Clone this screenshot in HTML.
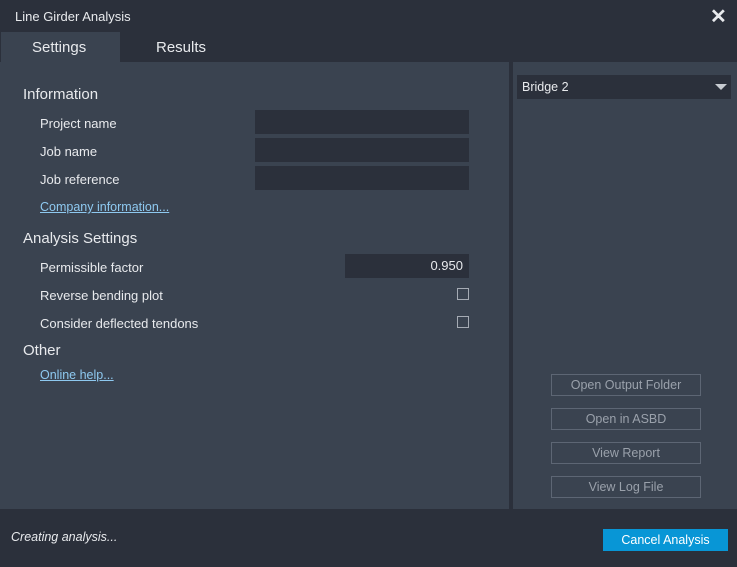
<!DOCTYPE html><html><head><style>
*{box-sizing:border-box}
body{margin:0;width:737px;height:567px;background:#2b303b;font-family:"Liberation Sans",sans-serif;color:#e8eaed;position:relative;overflow:hidden}
.a{position:absolute}
.p{background:#3a4350}
.t{font-size:13px}
.in{background:#2b303b}
.lk{color:#8ec9f0;text-decoration:underline;font-size:12.5px}
.cb{width:12px;height:12px;border:1px solid #a5abb4}
.b{border:1px solid #5d6674;color:#9aa1ab;font-size:12.5px;text-align:center;line-height:20px;width:150px;height:22px;left:551px}
</style></head><body>
<div class="a" style="left:15px;top:9px;font-size:13px">Line Girder Analysis</div>
<div class="a" style="left:710px;top:4px;font-size:20px;font-weight:bold">✕</div>
<div class="a p" style="left:1px;top:32px;width:119px;height:30px"></div>
<div class="a" style="left:32px;top:39px;font-size:15px">Settings</div>
<div class="a" style="left:156px;top:39px;font-size:15px">Results</div>
<div class="a p" style="left:0;top:62px;width:509px;height:447px"></div>
<div class="a p" style="left:513px;top:62px;width:224px;height:447px"></div>
<div class="a" style="left:23px;top:86px;font-size:15px">Information</div>
<div class="a t" style="left:40px;top:116px">Project name</div>
<div class="a t" style="left:40px;top:144px">Job name</div>
<div class="a t" style="left:40px;top:172px">Job reference</div>
<div class="a in" style="left:255px;top:110px;width:214px;height:24px"></div>
<div class="a in" style="left:255px;top:138px;width:214px;height:24px"></div>
<div class="a in" style="left:255px;top:166px;width:214px;height:24px"></div>
<div class="a lk" style="left:40px;top:200px">Company information...</div>
<div class="a" style="left:23px;top:230px;font-size:15px">Analysis Settings</div>
<div class="a t" style="left:40px;top:260px">Permissible factor</div>
<div class="a in t" style="left:345px;top:254px;width:124px;height:24px;line-height:24px;text-align:right;padding-right:6px">0.950</div>
<div class="a t" style="left:40px;top:288px">Reverse bending plot</div>
<div class="a cb" style="left:457px;top:288px"></div>
<div class="a t" style="left:40px;top:316px">Consider deflected tendons</div>
<div class="a cb" style="left:457px;top:316px"></div>
<div class="a" style="left:23px;top:342px;font-size:15px">Other</div>
<div class="a lk" style="left:40px;top:368px">Online help...</div>
<div class="a in" style="left:517px;top:75px;width:214px;height:24px;line-height:24px;padding-left:5px;font-size:12.5px">Bridge 2</div>
<div class="a" style="left:715px;top:84px;width:0;height:0;border-left:6px solid transparent;border-right:6px solid transparent;border-top:6px solid #c8ccd2"></div>
<div class="a b" style="top:374px">Open Output Folder</div>
<div class="a b" style="top:408px">Open in ASBD</div>
<div class="a b" style="top:442px">View Report</div>
<div class="a b" style="top:476px">View Log File</div>
<div class="a" style="left:11px;top:530px;font-size:12.5px;font-style:italic">Creating analysis...</div>
<div class="a" style="left:603px;top:529px;width:125px;height:22px;background:#0896d6;color:#fff;font-size:12.5px;text-align:center;line-height:22px">Cancel Analysis</div>
</body></html>
